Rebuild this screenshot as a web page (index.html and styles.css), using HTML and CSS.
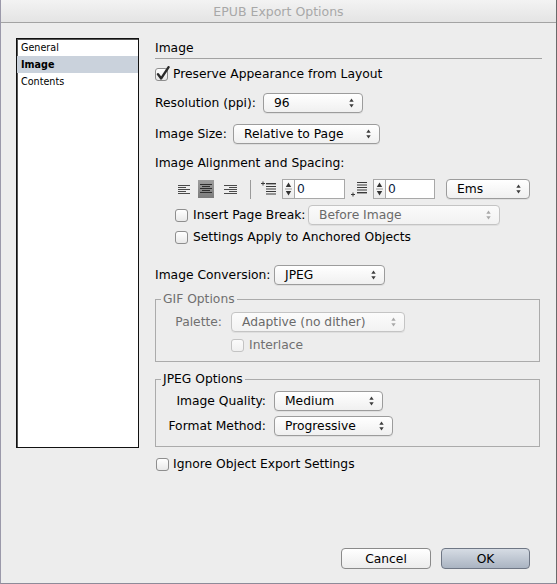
FILE: index.html
```html
<!DOCTYPE html>
<html>
<head>
<meta charset="utf-8">
<link rel="stylesheet" href="styles.css">
</head>
<body>
<div class="window">
  <div class="titlebar">EPUB Export Options</div>
  <div class="content">
    <ul class="sidebar">
      <li>General</li>
      <li class="sel">Image</li>
      <li>Contents</li>
    </ul>
    <div class="main">
      <div class="heading">Image</div>

      <div class="row r-preserve">
        <span class="cb"><svg class="check" width="16" height="16" viewBox="0 0 16 16"><path d="M3 8.2 L6.2 12.4 L13.6 1.2" fill="none" stroke="#2b2b2b" stroke-width="2.4" stroke-linecap="round" stroke-linejoin="round"/></svg></span>
        <span class="cbtext">Preserve Appearance from Layout</span>
      </div>

      <div class="row r-res">
        <span class="lbl w108">Resolution (ppi):</span>
        <div class="select s-res"><span>96</span><svg class="arr" width="5" height="10" viewBox="0 0 5 10"><polygon points="0.3,3.8 2.5,0.6 4.7,3.8"/><polygon points="0.3,6.2 2.5,9.4 4.7,6.2"/></svg></div>
      </div>

      <div class="row r-size">
        <span class="lbl w78">Image Size:</span>
        <div class="select s-size"><span>Relative to Page</span><svg class="arr" width="5" height="10" viewBox="0 0 5 10"><polygon points="0.3,3.8 2.5,0.6 4.7,3.8"/><polygon points="0.3,6.2 2.5,9.4 4.7,6.2"/></svg></div>
      </div>

      <div class="row r-alhead">Image Alignment and Spacing:</div>

      <div class="row r-align">
        <svg class="ic-left" width="12" height="10" viewBox="0 0 12 10"><g fill="#4a4a4a"><rect x="0" y="0" width="12" height="1"/><rect x="0" y="2" width="8" height="1"/><rect x="0" y="4" width="12" height="1"/><rect x="0" y="6" width="8" height="1"/><rect x="0" y="8" width="12" height="1"/></g></svg>
        <span class="al-sel"><svg width="12" height="10" viewBox="0 0 12 10"><g fill="#2e2e2e"><rect x="0" y="0" width="12" height="1"/><rect x="2" y="2" width="8" height="1"/><rect x="0" y="4" width="12" height="1"/><rect x="2" y="6" width="8" height="1"/><rect x="0" y="8" width="12" height="1"/></g></svg></span>
        <svg class="ic-right" width="13" height="10" viewBox="0 0 13 10"><g fill="#4a4a4a"><rect x="0" y="0" width="13" height="1"/><rect x="5" y="2" width="8" height="1"/><rect x="0" y="4" width="13" height="1"/><rect x="5" y="6" width="8" height="1"/><rect x="0" y="8" width="13" height="1"/></g></svg>
        <span class="vsep"></span>
        <svg class="ic-before" width="16" height="16" viewBox="0 0 16 16"><g fill="#3a3a3a"><rect x="0" y="2" width="4" height="1"/><rect x="1.5" y="0.5" width="1" height="4"/><rect x="5" y="2" width="10" height="1.4"/><rect x="5" y="5" width="10" height="1"/><rect x="5" y="7.5" width="10" height="1"/><rect x="5" y="10" width="10" height="1"/><rect x="5" y="12.5" width="10" height="1"/></g></svg>
        <span class="spin"><svg width="7" height="18" viewBox="0 0 7 18"><polygon points="0.8,7 3.5,2.5 6.2,7" fill="#333"/><rect x="0" y="8.5" width="7" height="1" fill="#9a9a9a"/><polygon points="0.8,11 3.5,15.5 6.2,11" fill="#333"/></svg></span>
        <span class="num n1">0</span>
        <svg class="ic-after" width="19" height="16" viewBox="0 0 19 16"><g fill="#3a3a3a"><rect x="8" y="1" width="10" height="1"/><rect x="8" y="3.5" width="10" height="1"/><rect x="8" y="6" width="10" height="1"/><rect x="8" y="8.5" width="10" height="1"/><rect x="8" y="11" width="10" height="1.4"/><rect x="2" y="13" width="4" height="1"/><rect x="3.5" y="11.5" width="1" height="4"/></g></svg>
        <span class="spin"><svg width="7" height="18" viewBox="0 0 7 18"><polygon points="0.8,7 3.5,2.5 6.2,7" fill="#333"/><rect x="0" y="8.5" width="7" height="1" fill="#9a9a9a"/><polygon points="0.8,11 3.5,15.5 6.2,11" fill="#333"/></svg></span>
        <span class="num n2">0</span>
        <div class="select s-ems"><span>Ems</span><svg class="arr" width="5" height="10" viewBox="0 0 5 10"><polygon points="0.3,3.8 2.5,0.6 4.7,3.8"/><polygon points="0.3,6.2 2.5,9.4 4.7,6.2"/></svg></div>
      </div>

      <div class="row r-break">
        <span class="cb"></span>
        <span class="cbtext w115">Insert Page Break:</span>
        <div class="select disabled s-break"><span>Before Image</span><svg class="arr" width="5" height="10" viewBox="0 0 5 10"><polygon points="0.3,3.8 2.5,0.6 4.7,3.8"/><polygon points="0.3,6.2 2.5,9.4 4.7,6.2"/></svg></div>
      </div>

      <div class="row r-anch">
        <span class="cb"></span>
        <span class="cbtext">Settings Apply to Anchored Objects</span>
      </div>

      <div class="row r-conv">
        <span class="lbl w119">Image Conversion:</span>
        <div class="select s-conv"><span>JPEG</span><svg class="arr" width="5" height="10" viewBox="0 0 5 10"><polygon points="0.3,3.8 2.5,0.6 4.7,3.8"/><polygon points="0.3,6.2 2.5,9.4 4.7,6.2"/></svg></div>
      </div>

      <fieldset class="group g-gif">
        <legend class="dim">GIF Options</legend>
        <div class="row r-pal">
          <span class="glbl w75 dim">Palette:</span>
          <div class="select disabled s-pal"><span>Adaptive (no dither)</span><svg class="arr" width="5" height="10" viewBox="0 0 5 10"><polygon points="0.3,3.8 2.5,0.6 4.7,3.8"/><polygon points="0.3,6.2 2.5,9.4 4.7,6.2"/></svg></div>
        </div>
        <div class="row r-inter">
          <span class="cb disabled"></span>
          <span class="cbtext dim">Interlace</span>
        </div>
      </fieldset>

      <fieldset class="group g-jpeg">
        <legend>JPEG Options</legend>
        <div class="row r-qual">
          <span class="glbl w118">Image Quality:</span>
          <div class="select s-qual"><span>Medium</span><svg class="arr" width="5" height="10" viewBox="0 0 5 10"><polygon points="0.3,3.8 2.5,0.6 4.7,3.8"/><polygon points="0.3,6.2 2.5,9.4 4.7,6.2"/></svg></div>
        </div>
        <div class="row r-fmt">
          <span class="glbl w118">Format Method:</span>
          <div class="select s-fmt"><span>Progressive</span><svg class="arr" width="5" height="10" viewBox="0 0 5 10"><polygon points="0.3,3.8 2.5,0.6 4.7,3.8"/><polygon points="0.3,6.2 2.5,9.4 4.7,6.2"/></svg></div>
        </div>
      </fieldset>

      <div class="row r-ignore">
        <span class="cb"></span>
        <span class="cbtext">Ignore Object Export Settings</span>
      </div>

      <div class="buttons">
        <button class="btn">Cancel</button>
        <button class="btn ok">OK</button>
      </div>
    </div>
  </div>
</div>
</body>
</html>
```
FILE: styles.css
```css
html, body {
  margin: 0;
  padding: 0;
  background: #ededed;
}
body {
  font-family: "DejaVu Sans", "Noto Sans", sans-serif;
  font-size: 12.3px;
  color: #000;
}
.window {
  width: 557px;
  height: 584px;
  box-sizing: border-box;
  background: #ededed;
  border-left: 1px solid #9b99aa;
  border-right: 1px solid #6a6a6a;
  border-bottom: 1px solid #8d8b99;
  display: flex;
  flex-direction: column;
}
.titlebar {
  height: 22px;
  border-bottom: 1px solid #a3a3a3;
  background: linear-gradient(#f3f3f3, #e4e4e4);
  text-align: center;
  line-height: 24px;
  color: #a8a8a8;
  font-size: 12.5px;
}
.content {
  display: flex;
  padding: 15px 0 0 15px;
  flex: 1;
}
.sidebar {
  list-style: none;
  margin: 0;
  padding: 0;
  width: 123px;
  height: 410px;
  box-sizing: border-box;
  background: #fff;
  border: 1px solid #111;
  box-shadow: inset 1px 1px 0 #555;
  font-size: 9.6px;
}
.sidebar li {
  height: 17px;
  line-height: 18px;
  padding-left: 4px;
}
.sidebar li.sel {
  background: #cad2dc;
  font-weight: bold;
}
.main {
  margin-left: 16px;
  padding-top: 1px;
  width: 387px;
  display: flex;
  flex-direction: column;
}
.heading {
  height: 19px;
  line-height: 19px;
  border-bottom: 1px solid #a2a2a2;
}
.row {
  display: flex;
  align-items: center;
  height: 20px;
  flex-shrink: 0;
}
.r-preserve { margin-top: 5px; }
.r-res { margin-top: 9px; }
.r-size { margin-top: 11px; }
.r-alhead { margin-top: 9px; }
.r-align { margin-top: 6px; padding-left: 23px; }
.r-break { margin-top: 6px; padding-left: 20px; }
.r-anch { margin-top: 2px; padding-left: 20px; }
.r-conv { margin-top: 18px; }
.r-ignore { margin-top: 7px; padding-left: 1px; }

.lbl { flex-shrink: 0; white-space: nowrap; }
.w108 { width: 108px; }
.w78 { width: 78px; }
.w119 { width: 119px; }
.w115 { width: 115px; }
.w75 { width: 75px; }
.w118 { width: 118px; }

.cb {
  position: relative;
  width: 13px;
  height: 13px;
  box-sizing: border-box;
  border: 1px solid #8e8e8e;
  border-radius: 3px;
  background: linear-gradient(#ffffff, #e9e9e9);
  flex-shrink: 0;
}
.cb.disabled {
  border-color: #c3c3c3;
  background: linear-gradient(#fbfbfb, #f0f0f0);
}
.check {
  position: absolute;
  left: -1px;
  top: -3px;
}
.cbtext {
  margin-left: 5px;
  white-space: nowrap;
}
.r-ignore .cbtext { margin-left: 4px; }
.dim { color: #707070; }

.select {
  display: flex;
  align-items: center;
  height: 20px;
  box-sizing: border-box;
  border: 1px solid #9c9c9c;
  border-radius: 4px;
  background: linear-gradient(#ffffff, #f0f0f0);
  box-shadow: 0 1px 0 rgba(0,0,0,0.06);
  padding-left: 10px;
  flex-shrink: 0;
  white-space: nowrap;
}
.select .arr {
  margin-left: auto;
  margin-right: 8px;
  fill: #3c3c3c;
}
.select.disabled {
  border-color: #c4c4c4;
  color: #6a6a6a;
  background: linear-gradient(#fbfbfb, #f2f2f2);
}
.select.disabled .arr { fill: #a8a8a8; }
.s-res { width: 100px; }
.s-size { width: 147px; }
.s-ems { width: 84px; margin-left: 11px; }
.s-break { width: 192px; }
.s-conv { width: 111px; }
.s-pal { width: 174px; }
.s-qual { width: 109px; }
.s-fmt { width: 119px; }

.ic-left { margin-top: 1px; }
.al-sel {
  margin-left: 8px;
  width: 16px;
  height: 18px;
  background: linear-gradient(#9e9e9e, #7c7c7c);
  display: flex;
  align-items: center;
  justify-content: center;
}
.ic-right { margin-left: 10px; margin-top: 1px; }
.vsep {
  margin-left: 13px;
  width: 1px;
  height: 19px;
  background: #9a9a9a;
}
.ic-before { margin-left: 10px; }
.spin {
  margin-left: 5px;
  width: 12px;
  height: 20px;
  box-sizing: border-box;
  border: 1px solid #a8a8a8;
  border-right: none;
  background: linear-gradient(#fdfdfd, #ececec);
  display: flex;
  align-items: center;
  justify-content: center;
}
.num {
  height: 20px;
  box-sizing: border-box;
  border: 1px solid #a8a8a8;
  background: #fff;
  line-height: 18px;
  padding-left: 2px;
  color: #0a1a40;
}
.n1 { width: 51px; }
.n2 { width: 50px; }
.ic-after { margin-left: 4px; }

.group {
  margin: 0 2px 0 0;
  padding: 0 0 6px 0;
  border: 1px solid #ababab;
  min-width: 0;
}
.group legend {
  margin-left: 5px;
  padding: 0 2px;
  line-height: 14px;
}
.g-gif { margin-top: 7px; }
.g-jpeg { margin-top: 10px; padding-bottom: 10px; }
.glbl {
  flex-shrink: 0;
  text-align: right;
  padding-right: 8px;
  box-sizing: border-box;
  white-space: nowrap;
}
.w75 { padding-right: 9px; }
.r-pal { margin-top: 6px; }
.r-inter { margin-top: 3px; padding-left: 75px; }
.r-qual { margin-top: 5px; }
.r-fmt { margin-top: 5px; }

.buttons {
  margin-top: 74px;
  display: flex;
  justify-content: flex-end;
  gap: 10px;
  padding-right: 12px;
}
.btn {
  font-family: "DejaVu Sans", "Noto Sans", sans-serif;
  font-size: 12.3px;
  height: 21px;
  width: 90px;
  box-sizing: border-box;
  border: 1px solid #8a8a8a;
  border-radius: 4px;
  background: linear-gradient(#ffffff, #ececec);
  color: #000;
  padding: 0;
}
.btn.ok {
  width: 89px;
  border-color: #6f7785;
  background: linear-gradient(#d6dce4, #aab4c2);
}
```
